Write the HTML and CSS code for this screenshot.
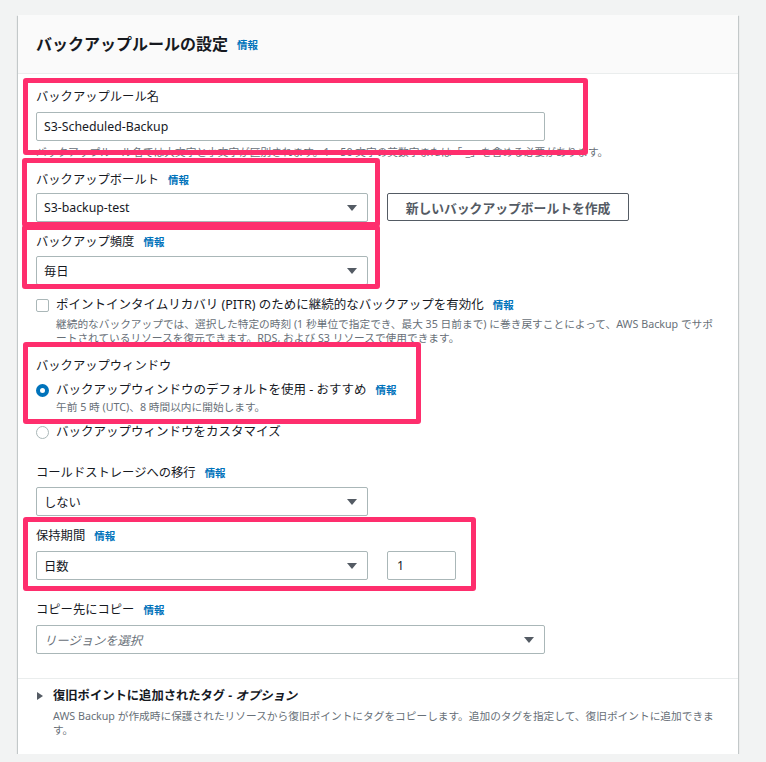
FILE: index.html
```html
<!DOCTYPE html>
<html lang="ja">
<head>
<meta charset="utf-8">
<title>バックアップルールの設定</title>
<link rel="stylesheet" href="styles.css">
</head>
<body>
<div class="page">
  <section class="card">
    <header class="card-head">
      <h2 class="title">バックアップルールの設定</h2>
      <a class="info" href="#">情報</a>
    </header>

    <div class="card-body">
      <div class="field f-name">
        <div class="label">バックアップルール名</div>
        <div class="ctrl w-wide mt7">S3-Scheduled-Backup</div>
        <div class="hint">バックアップルール名では大文字と小文字が区別されます。1～50 文字の英数字または「-_」を含める必要があります。</div>
      </div>

      <div class="field f-vault">
        <div class="label">バックアップボールト<a class="info" href="#">情報</a></div>
        <div class="row mt5">
          <div class="ctrl select w-mid"><span>S3-backup-test</span><i class="caret"></i></div>
          <div class="btn">新しいバックアップボールトを作成</div>
        </div>
      </div>

      <div class="field f-freq">
        <div class="label">バックアップ頻度<a class="info" href="#">情報</a></div>
        <div class="ctrl select w-mid mt6"><span>毎日</span><i class="caret"></i></div>
      </div>

      <div class="field f-pitr">
        <div class="check-row">
          <span class="checkbox"></span>
          <span class="text">ポイントインタイムリカバリ (PITR) のために継続的なバックアップを有効化<a class="info" href="#">情報</a></span>
        </div>
        <div class="desc">継続的なバックアップでは、選択した特定の時刻 (1 秒単位で指定でき、最大 35 日前まで) に巻き戻すことによって、AWS Backup でサポートされているリソースを復元できます。RDS, および S3 リソースで使用できます。</div>
      </div>

      <div class="field f-window">
        <div class="label">バックアップウィンドウ</div>
        <div class="check-row radio-1">
          <span class="radio on"></span>
          <span class="text">バックアップウィンドウのデフォルトを使用 - おすすめ<a class="info" href="#">情報</a></span>
        </div>
        <div class="desc sub">午前 5 時 (UTC)、8 時間以内に開始します。</div>
        <div class="check-row radio-2">
          <span class="radio"></span>
          <span class="text">バックアップウィンドウをカスタマイズ</span>
        </div>
      </div>

      <div class="field f-cold">
        <div class="label">コールドストレージへの移行<a class="info" href="#">情報</a></div>
        <div class="ctrl select w-mid mt6"><span>しない</span><i class="caret"></i></div>
      </div>

      <div class="field f-ret">
        <div class="label">保持期間<a class="info" href="#">情報</a></div>
        <div class="row mt7">
          <div class="ctrl select w-mid"><span>日数</span><i class="caret"></i></div>
          <div class="ctrl w-num num">1</div>
        </div>
      </div>

      <div class="field f-copy">
        <div class="label">コピー先にコピー<a class="info" href="#">情報</a></div>
        <div class="ctrl select w-wide mt7"><span class="placeholder">リージョンを選択</span><i class="caret"></i></div>
      </div>
    </div>

    <div class="card-foot">
      <div class="exp-title"><i class="tri"></i><span>復旧ポイントに追加されたタグ<em> - オプション</em></span></div>
      <div class="exp-desc">AWS Backup が作成時に保護されたリソースから復旧ポイントにタグをコピーします。追加のタグを指定して、復旧ポイントに追加できます。</div>
    </div>

    <div class="mark m1"></div>
    <div class="mark m2"></div>
    <div class="mark m3"></div>
    <div class="mark m4"></div>
    <div class="mark m5"></div>
  </section>
</div>
</body>
</html>
```

FILE: styles.css
```css
html, body {
  margin: 0;
  padding: 0;
}
body {
  background: #f2f3f3;
  font-family: "Noto Sans", "Noto Sans CJK JP", sans-serif;
  color: #16191f;
}
.page {
  padding: 15px 28px 0 18px;
}
.card {
  position: relative;
  width: 720px;
  background: #fff;
  box-shadow: 0 1px 1px 0 rgba(0, 28, 36, 0.3), 1px 1px 1px 0 rgba(0, 28, 36, 0.15), -1px 1px 1px 0 rgba(0, 28, 36, 0.15);
}
.card-head {
  height: 58px;
  display: flex;
  align-items: center;
  padding-left: 18px;
  background: #fafafa;
  border-bottom: 1px solid #eaeded;
}
.title {
  margin: 0;
  font-size: 16px;
  line-height: 20px;
  font-weight: 700;
}
.info {
  color: #0073bb;
  font-size: 10.5px;
  font-weight: 700;
  margin-left: 9px;
  text-decoration: none;
}
.card-body {
  padding: 15px 18px 24px;
}
.label {
  font-size: 12.3px;
  line-height: 16px;
}
.mt5 { margin-top: 5px; }
.mt6 { margin-top: 6px; }
.mt7 { margin-top: 7px; }
.ctrl {
  box-sizing: border-box;
  height: 29px;
  border: 1px solid #aab7b8;
  border-radius: 2px;
  display: flex;
  align-items: center;
  padding: 0 10px 0 7px;
  font-size: 12.3px;
  background: #fff;
}
.w-wide { width: 509px; }
.w-mid { width: 332px; }
.w-num { width: 69px; margin-left: 19px; }
.num { padding-left: 9px; }
.select {
  justify-content: space-between;
}
.caret {
  display: block;
  width: 0;
  height: 0;
  border-left: 5px solid transparent;
  border-right: 5px solid transparent;
  border-top: 6px solid #545b64;
}
.placeholder {
  color: #687078;
  font-style: italic;
}
.hint {
  margin-top: 4px;
  font-size: 10.7px;
  line-height: 14px;
  color: #687078;
  white-space: nowrap;
}
.row {
  display: flex;
  align-items: flex-start;
}
.btn {
  box-sizing: border-box;
  width: 242px;
  height: 28px;
  margin-left: 19px;
  border: 1px solid #545b64;
  border-radius: 2px;
  display: flex;
  align-items: center;
  justify-content: center;
  font-size: 12.8px;
  font-weight: 700;
  color: #545b64;
}
.f-vault { margin-top: 13px; }
.f-freq { margin-top: 12px; }
.f-pitr { margin-top: 12px; }
.f-window { margin-top: 13px; }
.f-cold { margin-top: 25px; }
.f-ret { margin-top: 12px; }
.f-copy { margin-top: 22px; }
.check-row {
  display: flex;
  align-items: center;
  height: 16px;
  font-size: 12.5px;
  line-height: 16px;
}
.checkbox {
  box-sizing: border-box;
  width: 13px;
  height: 13px;
  border: 1px solid #aab7b8;
  border-radius: 2px;
  margin-right: 7px;
  flex: none;
}
.radio {
  box-sizing: border-box;
  width: 13px;
  height: 13px;
  border: 1px solid #aab7b8;
  border-radius: 50%;
  margin-right: 7px;
  flex: none;
}
.radio.on {
  border: 4px solid #0073bb;
  background: #fff;
}
.desc {
  margin-top: 4px;
  padding-left: 20px;
  font-size: 10.7px;
  line-height: 14px;
  color: #687078;
}
.radio-1 { margin-top: 8px; }
.desc.sub { margin-top: 2px; }
.radio-2 { margin-top: 10px; }
.card-foot {
  border-top: 1px solid #eaeded;
  padding: 9px 18px 17px 18px;
}
.exp-title {
  display: flex;
  align-items: center;
  height: 16px;
  font-size: 12.3px;
  line-height: 16px;
  font-weight: 700;
  color: #16191f;
}
.exp-title em {
  font-style: italic;
}
.tri {
  display: block;
  width: 0;
  height: 0;
  margin-left: 1px;
  margin-right: 10px;
  border-top: 4px solid transparent;
  border-bottom: 4px solid transparent;
  border-left: 6px solid #545b64;
}
.exp-desc {
  margin-top: 5px;
  padding-left: 17px;
  font-size: 10.7px;
  line-height: 14px;
  color: #687078;
}
.mark {
  position: absolute;
  box-sizing: border-box;
  border: 5px solid #fe2e6d;
  border-radius: 3px;
  pointer-events: none;
}
.m1 { left: 5px; top: 63px; width: 565px; height: 77px; }
.m2 { left: 4px; top: 143px; width: 358px; height: 69px; }
.m3 { left: 4px; top: 210px; width: 358px; height: 64px; }
.m4 { left: 5px; top: 327px; width: 398px; height: 82px; }
.m5 { left: 5px; top: 502px; width: 453px; height: 74px; }
```
